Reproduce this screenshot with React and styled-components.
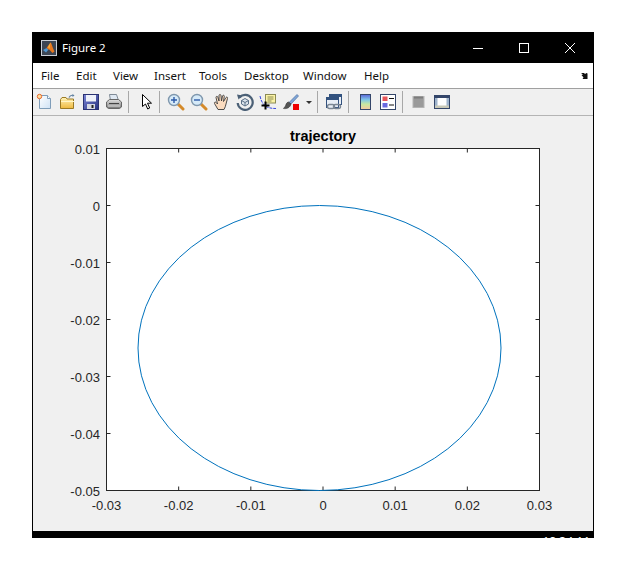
import React from 'react'
import styled, { createGlobalStyle } from 'styled-components'

const GlobalStyle = createGlobalStyle`
    html, body {
        margin: 0;
        padding: 0;
        background: #fff;
    }
`

const MENUS = [
    { label: 'File', width: 35 },
    { label: 'Edit', width: 37 },
    { label: 'View', width: 41 },
    { label: 'Insert', width: 45 },
    { label: 'Tools', width: 45 },
    { label: 'Desktop', width: 59 },
    { label: 'Window', width: 61 },
    { label: 'Help', width: 40 },
]

const X_LABELS = ['-0.03', '-0.02', '-0.01', '0', '0.01', '0.02', '0.03']
const Y_LABELS = ['0.01', '0', '-0.01', '-0.02', '-0.03', '-0.04', '-0.05']

const PLOT = { left: 73.5, right: 506.5, top: 32.5, bottom: 374.5 }

export default function App() {
    return (
        <>
            <GlobalStyle />
            <Window>
                <TitleBar>
                    <MatlabLogo />
                    <WindowTitle>Figure 2</WindowTitle>
                    <Controls>
                        <ControlButton>
                            <svg width="12" height="12" viewBox="0 0 12 12">
                                <path d="M1 6.500h10" stroke="#fff" strokeWidth="1" />
                            </svg>
                        </ControlButton>
                        <ControlButton>
                            <svg width="12" height="12" viewBox="0 0 12 12">
                                <rect x="1.500" y="1.500" width="9" height="9" fill="none" stroke="#fff" />
                            </svg>
                        </ControlButton>
                        <ControlButton>
                            <svg width="12" height="12" viewBox="0 0 12 12">
                                <path d="M1 1l10 10M11 1L1 11" stroke="#fff" strokeWidth="1" />
                            </svg>
                        </ControlButton>
                    </Controls>
                </TitleBar>

                <MenuBar>
                    {MENUS.map(m => (
                        <MenuItem key={m.label} $width={m.width}>{m.label}</MenuItem>
                    ))}
                    <DockArrow>
                        <svg width="7" height="6" viewBox="0 0 7 6">
                            <path d="M0 0h3l1 1 1.500-1 1 .5V6H1.500L2.500 4.500 .5 2 2 1.500z" fill="#111" />
                        </svg>
                    </DockArrow>
                </MenuBar>

                <ToolBar>
                    <Tool><NewIcon /></Tool>
                    <Tool><OpenIcon /></Tool>
                    <Tool><SaveIcon /></Tool>
                    <Tool><PrintIcon /></Tool>
                    <Separator $before={3} $after={6} />
                    <Tool><PointerIcon /></Tool>
                    <Separator $before={1} $after={4} />
                    <Tool><ZoomIcon plus /></Tool>
                    <Tool><ZoomIcon /></Tool>
                    <Tool><HandIcon /></Tool>
                    <Tool><RotateIcon /></Tool>
                    <Tool><CursorIcon /></Tool>
                    <Tool><BrushIcon /></Tool>
                    <DropArrow />
                    <Separator $before={0} $after={4} />
                    <Tool><LinkIcon /></Tool>
                    <Separator $before={3} $after={4} />
                    <Tool><ColorbarIcon /></Tool>
                    <Tool><LegendIcon /></Tool>
                    <Separator $before={3} $after={4} />
                    <Tool><GreyIcon /></Tool>
                    <Tool><PlotToolsIcon /></Tool>
                </ToolBar>

                <Canvas>
                    <Trajectory />
                </Canvas>

                <BottomStrip>
                    <Clock>18:34:11</Clock>
                </BottomStrip>
            </Window>
        </>
    )
}

function Trajectory() {
    const dx = (PLOT.right - PLOT.left) / 6
    const dy = (PLOT.bottom - PLOT.top) / 6
    const xs = X_LABELS.map((_, i) => PLOT.left + i * dx)
    const ys = Y_LABELS.map((_, i) => PLOT.top + i * dy)
    const ticks = [
        ...xs.map(x => `M${x} ${PLOT.top}v4M${x} ${PLOT.bottom}v-4`),
        ...ys.map(y => `M${PLOT.left} ${y}h4M${PLOT.right} ${y}h-4`),
    ].join('')
    return (
        <svg width="560" height="415" viewBox="0 0 560 415">
            <rect
                x={PLOT.left}
                y={PLOT.top}
                width={PLOT.right - PLOT.left}
                height={PLOT.bottom - PLOT.top}
                fill="#fff"
                stroke="#262626"
            />
            <path d={ticks} stroke="#262626" fill="none" />
            <ellipse cx="286.500" cy="232" rx="181.500" ry="142.500" fill="none" stroke="#0072bd" strokeWidth="1" />
            <PlotTitle x="290" y="25">trajectory</PlotTitle>
            {X_LABELS.map((l, i) => (
                <TickLabel key={l} x={xs[i]} y="394" textAnchor="middle">{l}</TickLabel>
            ))}
            {Y_LABELS.map((l, i) => (
                <TickLabel key={l} x="67" y={ys[i] + 5} textAnchor="end">{l}</TickLabel>
            ))}
        </svg>
    )
}

function MatlabLogo() {
    return (
        <LogoBox>
            <svg width="16" height="16" viewBox="0 0 16 16">
                <rect x="0.500" y="0.500" width="15" height="15" fill="#3d4654" stroke="#c9ced6" />
                <path d="M2 10l3.500-2 2 1.600L5 12.500z" fill="#4f95d0" />
                <path d="M5.500 8L9.500 2.500c.8 0 2 5 4 9l-2 1.500C9.500 11 8 9 7.500 9.600z" fill="#e8791f" />
                <path d="M9.500 2.500L7 7l1.500 2z" fill="#f7b23b" />
            </svg>
        </LogoBox>
    )
}

function NewIcon() {
    return (
        <svg width="18" height="18" viewBox="0 0 18 18">
            <defs>
                <linearGradient id="pageFill" x1="0" y1="0" x2="1" y2="1">
                    <stop offset="0" stopColor="#fff" />
                    <stop offset="1" stopColor="#cfe2f5" />
                </linearGradient>
            </defs>
            <path d="M3.500 2.500h8l3 3v10h-11z" fill="url(#pageFill)" stroke="#7f9db9" />
            <path d="M11.500 2.500v3h3" fill="#fff" stroke="#7f9db9" />
            <circle cx="3.500" cy="3.500" r="2.200" fill="#fbe0a0" stroke="#e8662a" />
        </svg>
    )
}

function OpenIcon() {
    return (
        <svg width="18" height="18" viewBox="0 0 18 18">
            <defs>
                <linearGradient id="folderFill" x1="0" y1="0" x2="0" y2="1">
                    <stop offset="0" stopColor="#fff3b8" />
                    <stop offset="1" stopColor="#eeb93f" />
                </linearGradient>
            </defs>
            <path d="M10 4.500c1-2 3-2.500 4.500-2" fill="none" stroke="#5f7f9f" strokeWidth="1.200" />
            <path d="M13.500 1l2 1.500-2 1.500z" fill="#5f7f9f" />
            <path d="M1.500 15.500v-9l1.500-2h4l1 1.500h6.500v9.500z" fill="url(#folderFill)" stroke="#9b7a24" />
            <path d="M2 8.500h13" stroke="#fff6c9" />
        </svg>
    )
}

function SaveIcon() {
    return (
        <svg width="18" height="18" viewBox="0 0 18 18">
            <defs>
                <linearGradient id="diskFill" x1="0" y1="0" x2="1" y2="1">
                    <stop offset="0" stopColor="#7c86d8" />
                    <stop offset="1" stopColor="#27327f" />
                </linearGradient>
            </defs>
            <rect x="1.500" y="1.500" width="15" height="15" fill="url(#diskFill)" stroke="#2a3272" />
            <rect x="4" y="2" width="10" height="6.500" fill="#eef1fa" />
            <rect x="5" y="11" width="8" height="5" fill="#d5d8e0" />
            <rect x="9.500" y="12" width="2" height="3" fill="#222" />
        </svg>
    )
}

function PrintIcon() {
    return (
        <svg width="18" height="18" viewBox="0 0 18 18">
            <defs>
                <linearGradient id="printFill" x1="0" y1="0" x2="0" y2="1">
                    <stop offset="0" stopColor="#e2e2e2" />
                    <stop offset="1" stopColor="#767676" />
                </linearGradient>
            </defs>
            <path d="M4.500 1.500h7l2 6h-8z" fill="#dfe8f2" stroke="#7f8a96" />
            <path d="M1.500 9l3-2.500h9l3 2.500v5l-2 1.500h-11l-2-1.500z" fill="url(#printFill)" stroke="#666" />
            <path d="M4 10.500h10" stroke="#444" />
            <path d="M3 13h12" stroke="#ddd" />
        </svg>
    )
}

function PointerIcon() {
    return (
        <svg width="18" height="18" viewBox="0 0 18 18">
            <path d="M4.500 1.500v12l3-2.500 2.200 5 2-1-2.200-4.800h4z" fill="#fff" stroke="#000" strokeLinejoin="miter" />
        </svg>
    )
}

function ZoomIcon({ plus }) {
    return (
        <svg width="18" height="18" viewBox="0 0 18 18">
            <path d="M10.500 10.500l5.500 5.500" stroke="#d48a2a" strokeWidth="3" strokeLinecap="round" />
            <circle cx="7" cy="7" r="5.500" fill="#d6eaf8" stroke="#7f97ad" strokeWidth="1.400" />
            <path d={plus ? 'M4 7h6M7 4v6' : 'M4 7h6'} stroke="#2c5aa8" strokeWidth="1.400" />
        </svg>
    )
}

function HandIcon() {
    return (
        <svg width="18" height="18" viewBox="0 0 18 18">
            <path
                d="M5 16.500l-3.500-6c-.6-1.200.9-1.900 1.700-1L4.500 11 3 4.500c-.2-1.300 1.500-1.600 1.800-.4L6 8 6 2.500c0-1.300 1.900-1.300 2 0L8.500 8l1-5c.3-1.200 2-.9 1.800.4L10.500 8.500l2.500-4c.7-1 2-.2 1.500.9L13 11c-.3 2-1 3.500-2 5.500z"
                fill="#fbdcc0"
                stroke="#3b3b3b"
                strokeWidth="0.900"
            />
        </svg>
    )
}

function RotateIcon() {
    return (
        <svg width="18" height="18" viewBox="0 0 18 18">
            <path d="M3.500 4.500A7.500 7.500 0 1 1 1.700 10" fill="none" stroke="#4b6076" strokeWidth="2.200" />
            <path d="M1 1.500l5.500 1-4 4z" fill="#4b6076" />
            <path d="M9 5.500l3.500 2v3.500L9 13l-3.500-2V7.500z" fill="#dbe4ec" stroke="#5b7087" />
            <path d="M5.500 7.500L9 9.500l3.500-2M9 9.500V13" fill="none" stroke="#5b7087" />
        </svg>
    )
}

function CursorIcon() {
    return (
        <svg width="18" height="18" viewBox="0 0 18 18">
            <path d="M1 3c1 5 3 9 7 11 2.500 1 5 1.500 9 1.500" fill="none" stroke="#2233dd" strokeWidth="0.900" strokeDasharray="3 1" />
            <rect x="6.500" y="1.500" width="10" height="8.500" fill="#fbf3a6" stroke="#8b8a55" />
            <path d="M8.500 4h6M8.500 6h6M8.500 8h4" stroke="#8b8a55" />
            <path d="M6.500 8.500v8M2.500 12.500h8" stroke="#000" strokeWidth="2" />
        </svg>
    )
}

function BrushIcon() {
    return (
        <svg width="18" height="18" viewBox="0 0 18 18">
            <path d="M7 9.500L15 1.500l1.500 1.500L9 11z" fill="#7fa6d8" stroke="#4d6f9f" strokeWidth="0.700" />
            <path d="M6.500 9c-2.500.5-2.500 3-3 4-.3.800-1.500 1.500-2 2.500 3 .5 6.500-.5 7.500-4.500z" fill="#555" stroke="#333" strokeWidth="0.600" />
            <rect x="11" y="11" width="6" height="6" fill="#ee0000" />
        </svg>
    )
}

function LinkIcon() {
    return (
        <svg width="18" height="18" viewBox="0 0 18 18">
            <rect x="4.500" y="1.500" width="12" height="10" fill="#e8eef6" stroke="#33527f" />
            <rect x="4.500" y="1.500" width="12" height="2.500" fill="#33527f" />
            <rect x="1.500" y="4.500" width="12" height="10" fill="#e8eef6" stroke="#33527f" />
            <rect x="1.500" y="4.500" width="12" height="2.500" fill="#33527f" />
            <rect x="2.500" y="11.500" width="7" height="4" rx="2" fill="#e8eef6" stroke="#7b8794" strokeWidth="1.400" />
            <rect x="8.500" y="11.500" width="7" height="4" rx="2" fill="none" stroke="#7b8794" strokeWidth="1.400" />
        </svg>
    )
}

function ColorbarIcon() {
    return (
        <svg width="18" height="18" viewBox="0 0 18 18">
            <defs>
                <linearGradient id="barFill" x1="0" y1="0" x2="0" y2="1">
                    <stop offset="0" stopColor="#5a63d8" />
                    <stop offset="0.350" stopColor="#7fc7e8" />
                    <stop offset="0.650" stopColor="#c8e8a0" />
                    <stop offset="1" stopColor="#f8c9a0" />
                </linearGradient>
            </defs>
            <rect x="4.500" y="1.500" width="10" height="15" fill="url(#barFill)" stroke="#34466a" />
        </svg>
    )
}

function LegendIcon() {
    return (
        <svg width="18" height="18" viewBox="0 0 18 18">
            <rect x="1.500" y="1.500" width="15" height="15" fill="#fff" stroke="#34466a" />
            <rect x="3.500" y="3.500" width="5" height="4.500" fill="#e8575b" />
            <rect x="3.500" y="10" width="5" height="4.500" fill="#6a6ae0" />
            <path d="M10 5.500h5M10 12h5" stroke="#111" />
        </svg>
    )
}

function GreyIcon() {
    return (
        <svg width="18" height="18" viewBox="0 0 18 18">
            <rect x="3" y="3.500" width="11" height="11" fill="#9a9a9a" stroke="#b4b4b4" />
            <rect x="4" y="3.500" width="9" height="2" fill="#7d7d7d" />
        </svg>
    )
}

function PlotToolsIcon() {
    return (
        <svg width="18" height="18" viewBox="0 0 18 18">
            <rect x="1.500" y="2.500" width="15" height="13" fill="#fff" stroke="#34466a" />
            <rect x="2" y="3" width="14" height="2" fill="#34466a" />
            <rect x="2" y="5" width="2.500" height="10" fill="#9fb4cc" />
            <rect x="13.500" y="5" width="2.500" height="10" fill="#9fb4cc" />
            <rect x="2" y="12.500" width="14" height="2.500" fill="#c9c9b8" />
        </svg>
    )
}

const Window = styled.div`
    width: 560px;
    height: 506px;
    margin: 32px 0 0 32px;
    border-left: 1px solid #000;
    border-right: 1px solid #000;
    display: flex;
    flex-direction: column;
    overflow: hidden;
`

const TitleBar = styled.div`
    height: 31px;
    flex: none;
    background: #000;
    display: flex;
    align-items: center;
`

const LogoBox = styled.div`
    width: 16px;
    height: 16px;
    margin-left: 8px;
    display: flex;
`

const WindowTitle = styled.div`
    margin-left: 5px;
    color: #fff;
    font: 11.5px "Noto Sans", "Open Sans", sans-serif;
`

const Controls = styled.div`
    margin-left: auto;
    display: flex;
    height: 100%;
`

const ControlButton = styled.div`
    width: 46px;
    height: 100%;
    display: flex;
    align-items: center;
    justify-content: center;
`

const MenuBar = styled.div`
    height: 25px;
    flex: none;
    background: #fff;
    border-bottom: 1px solid #a0a0a0;
    padding-left: 8px;
    display: flex;
    align-items: center;
`

const MenuItem = styled.div`
    width: ${p => p.$width}px;
    color: #111;
    font: 11.5px "Noto Sans", "Open Sans", sans-serif;
`

const DockArrow = styled.div`
    margin-left: auto;
    margin-right: 5px;
    display: flex;
`

const ToolBar = styled.div`
    height: 26px;
    flex: none;
    background: #f0f0f0;
    border-bottom: 1px solid #b4b4b4;
    display: flex;
    align-items: center;
`

const Tool = styled.div`
    width: 23px;
    height: 100%;
    flex: none;
    display: flex;
    align-items: center;
    justify-content: center;
`

const Separator = styled.div`
    width: 1px;
    height: 22px;
    flex: none;
    margin: 0 ${p => p.$after}px 0 ${p => p.$before}px;
    background: #a8a8a8;
`

const DropArrow = styled.div`
    width: 0;
    height: 0;
    flex: none;
    margin: 0 5px 0 4px;
    border-left: 3px solid transparent;
    border-right: 3px solid transparent;
    border-top: 3px solid #333;
`

const Canvas = styled.div`
    flex: 1;
    min-height: 0;
    background: #f0f0f0;
    svg {
        display: block;
    }
`

const PlotTitle = styled.text`
    font: bold 14.5px "Liberation Sans", Arial, sans-serif;
    fill: #000;
    text-anchor: middle;
`

const TickLabel = styled.text`
    font: 13px "Liberation Sans", Arial, sans-serif;
    fill: #262626;
`

const BottomStrip = styled.div`
    height: 7px;
    flex: none;
    background: #000;
    display: flex;
    justify-content: flex-end;
    overflow: hidden;
`

const Clock = styled.div`
    margin: 2px 3px 0 0;
    color: #fff;
    font: 12px "Noto Sans", "Open Sans", sans-serif;
`
